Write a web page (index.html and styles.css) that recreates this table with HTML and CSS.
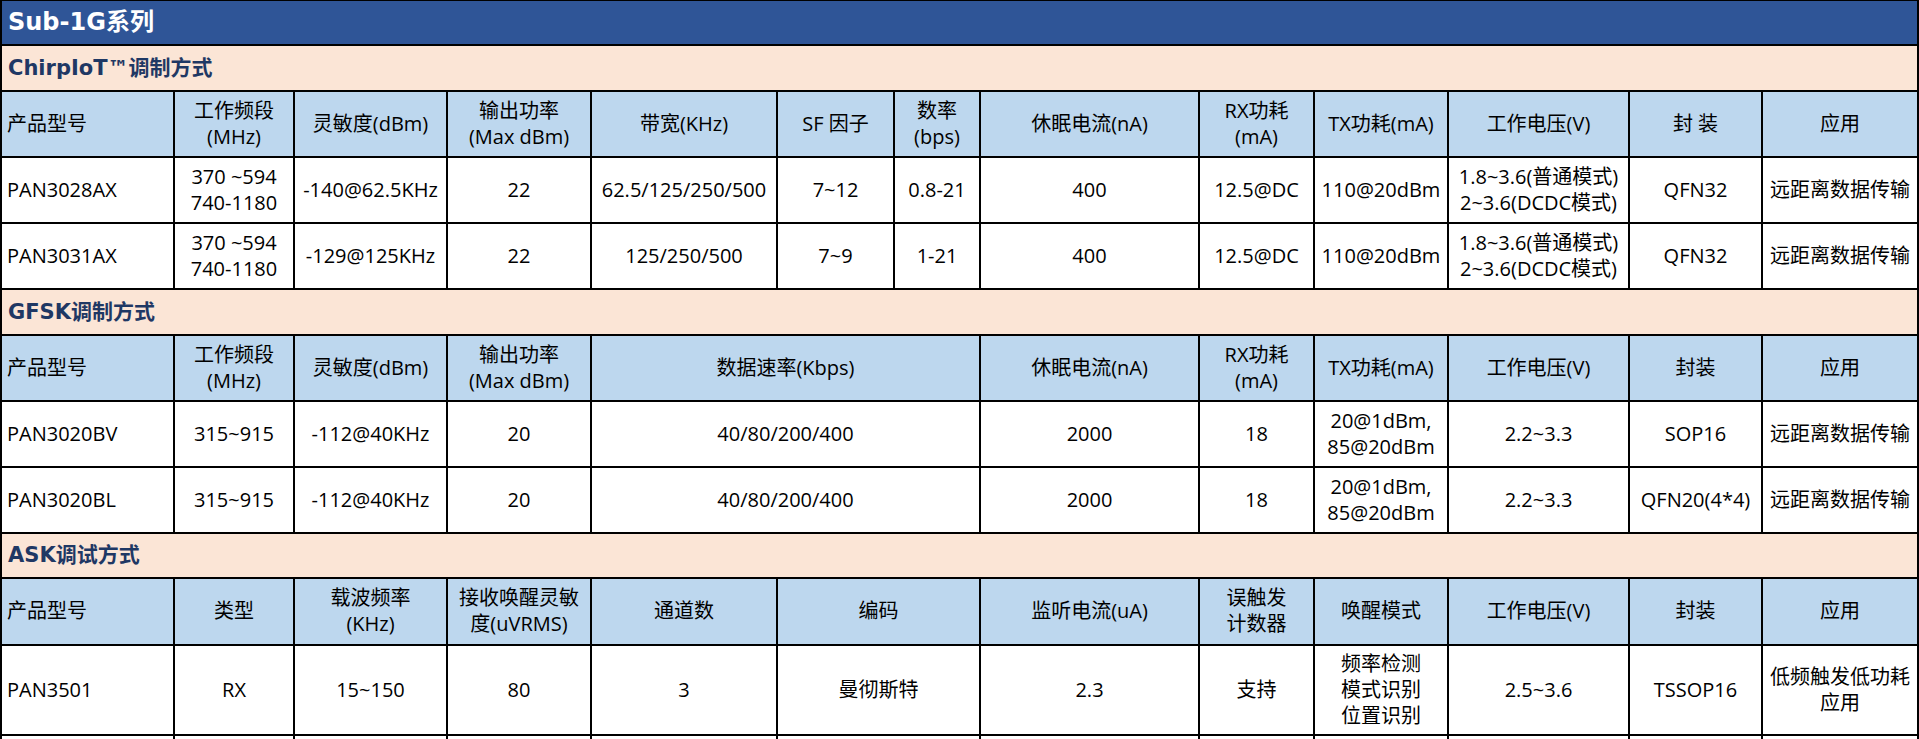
FILE: index.html
```html
<!DOCTYPE html>
<html lang="zh-CN">
<head>
<meta charset="utf-8">
<title>Sub-1G系列</title>
<link rel="stylesheet" href="styles.css">
</head>
<body>
<table class="sheet">
  <colgroup>
    <col class="c1"><col class="c2"><col class="c3"><col class="c4"><col class="c5"><col class="c6"><col class="c7"><col class="c8"><col class="c9"><col class="c10"><col class="c11"><col class="c12"><col class="c13">
  </colgroup>
  <tbody>
    <tr class="r-title"><td colspan="13">Sub-1G系列</td></tr>

    <tr class="r-sec"><td colspan="13">ChirpIoT™调制方式</td></tr>
    <tr class="r-head">
      <td class="name">产品型号</td>
      <td>工作频段<br>(MHz)</td>
      <td>灵敏度(dBm)</td>
      <td>输出功率<br>(Max dBm)</td>
      <td>带宽(KHz)</td>
      <td>SF 因子</td>
      <td>数率<br>(bps)</td>
      <td>休眠电流(nA)</td>
      <td>RX功耗<br>(mA)</td>
      <td>TX功耗(mA)</td>
      <td>工作电压(V)</td>
      <td>封 装</td>
      <td>应用</td>
    </tr>
    <tr class="r-data">
      <td class="name">PAN3028AX</td>
      <td>370 ~594<br>740-1180</td>
      <td>-140@62.5KHz</td>
      <td>22</td>
      <td>62.5/125/250/500</td>
      <td>7~12</td>
      <td>0.8-21</td>
      <td>400</td>
      <td>12.5@DC</td>
      <td>110@20dBm</td>
      <td>1.8~3.6(普通模式)<br>2~3.6(DCDC模式)</td>
      <td>QFN32</td>
      <td>远距离数据传输</td>
    </tr>
    <tr class="r-data">
      <td class="name">PAN3031AX</td>
      <td>370 ~594<br>740-1180</td>
      <td>-129@125KHz</td>
      <td>22</td>
      <td>125/250/500</td>
      <td>7~9</td>
      <td>1-21</td>
      <td>400</td>
      <td>12.5@DC</td>
      <td>110@20dBm</td>
      <td>1.8~3.6(普通模式)<br>2~3.6(DCDC模式)</td>
      <td>QFN32</td>
      <td>远距离数据传输</td>
    </tr>

    <tr class="r-sec"><td colspan="13">GFSK调制方式</td></tr>
    <tr class="r-head">
      <td class="name">产品型号</td>
      <td>工作频段<br>(MHz)</td>
      <td>灵敏度(dBm)</td>
      <td>输出功率<br>(Max dBm)</td>
      <td colspan="3">数据速率(Kbps)</td>
      <td>休眠电流(nA)</td>
      <td>RX功耗<br>(mA)</td>
      <td>TX功耗(mA)</td>
      <td>工作电压(V)</td>
      <td>封装</td>
      <td>应用</td>
    </tr>
    <tr class="r-data">
      <td class="name">PAN3020BV</td>
      <td>315~915</td>
      <td>-112@40KHz</td>
      <td>20</td>
      <td colspan="3">40/80/200/400</td>
      <td>2000</td>
      <td>18</td>
      <td>20@1dBm,<br>85@20dBm</td>
      <td>2.2~3.3</td>
      <td>SOP16</td>
      <td>远距离数据传输</td>
    </tr>
    <tr class="r-data">
      <td class="name">PAN3020BL</td>
      <td>315~915</td>
      <td>-112@40KHz</td>
      <td>20</td>
      <td colspan="3">40/80/200/400</td>
      <td>2000</td>
      <td>18</td>
      <td>20@1dBm,<br>85@20dBm</td>
      <td>2.2~3.3</td>
      <td>QFN20(4*4)</td>
      <td>远距离数据传输</td>
    </tr>

    <tr class="r-sec r-sec-last"><td colspan="13">ASK调试方式</td></tr>
    <tr class="r-head r-head-ask">
      <td class="name">产品型号</td>
      <td>类型</td>
      <td>载波频率<br>(KHz)</td>
      <td>接收唤醒灵敏<br>度(uVRMS)</td>
      <td>通道数</td>
      <td colspan="2">编码</td>
      <td>监听电流(uA)</td>
      <td>误触发<br>计数器</td>
      <td>唤醒模式</td>
      <td>工作电压(V)</td>
      <td>封装</td>
      <td>应用</td>
    </tr>
    <tr class="r-tall">
      <td class="name">PAN3501</td>
      <td>RX</td>
      <td>15~150</td>
      <td>80</td>
      <td>3</td>
      <td colspan="2">曼彻斯特</td>
      <td>2.3</td>
      <td>支持</td>
      <td>频率检测<br>模式识别<br>位置识别</td>
      <td>2.5~3.6</td>
      <td>TSSOP16</td>
      <td>低频触发低功耗<br>应用</td>
    </tr>
    <tr class="r-data">
      <td class="name"></td>
      <td></td>
      <td></td>
      <td></td>
      <td></td>
      <td colspan="2"></td>
      <td></td>
      <td></td>
      <td></td>
      <td></td>
      <td></td>
      <td></td>
    </tr>
  </tbody>
</table>
</body>
</html>
```

FILE: styles.css
```css
html, body {
  margin: 0;
  padding: 0;
  overflow: hidden;
  background: #ffffff;
}

.sheet {
  border-collapse: collapse;
  table-layout: fixed;
  width: 1918px;
  font-family: "Open Sans", "Noto Sans CJK SC", sans-serif;
  font-size: 20px;
  line-height: 26px;
  color: #000000;
}

.c1 { width: 173px; }
.c2 { width: 120px; }
.c3 { width: 153px; }
.c4 { width: 144px; }
.c5 { width: 186px; }
.c6 { width: 117px; }
.c7 { width: 86px; }
.c8 { width: 219px; }
.c9 { width: 115px; }
.c10 { width: 134px; }
.c11 { width: 181px; }
.c12 { width: 133px; }
.c13 { width: 156px; }

.sheet td {
  border: 2px solid #000000;
  padding: 0 3px;
  text-align: center;
  vertical-align: middle;
  white-space: nowrap;
  overflow: hidden;
}

.sheet td.name {
  text-align: left;
  padding-left: 5px;
}

.r-title { height: 44px; }
.r-title td {
  border-top-width: 1px;
  background: #2f5597;
  color: #ffffff;
  text-align: left;
  padding-left: 6px;
  font-family: "DejaVu Sans", "Noto Sans CJK SC", sans-serif;
  font-weight: bold;
  font-size: 24px;
}

.r-sec { height: 46px; }
.r-sec-last { height: 45px; }
.r-sec td {
  background: #fbe5d6;
  color: #1f3864;
  text-align: left;
  padding-left: 6px;
  font-family: "DejaVu Sans", "Noto Sans CJK SC", sans-serif;
  font-weight: bold;
  font-size: 21px;
}

.r-head { height: 66px; }
.r-head-ask { height: 67px; }
.r-head td { background: #bdd7ee; }

.r-data { height: 66px; }
.r-tall { height: 90px; }
```
